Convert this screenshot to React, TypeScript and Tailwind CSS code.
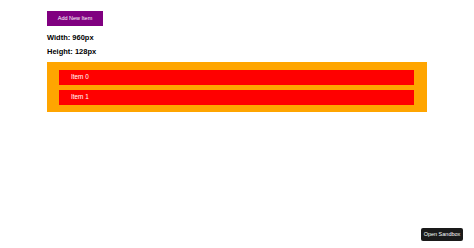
import React, { useState } from "react";

export default function App() {
  const [items, setItems] = useState<number[]>([0, 1]);
  return (
    <div className="relative w-[474px] h-[248px] bg-white overflow-hidden" style={{ fontFamily: '"Liberation Sans", Arial, sans-serif' }}>
      <div className="flex flex-col pl-[47px] pt-[11px]">
        <button
          onClick={() => setItems([...items, items.length])}
          className="w-[56px] h-[15px] bg-[#800080] text-white text-[5.5px] leading-none flex items-center justify-center"
        >
          Add New Item
        </button>
        <div className="mt-[5px] text-[7.5px] font-bold leading-[14px] text-black">Width: 960px</div>
        <div className="text-[7.5px] font-bold leading-[14px] text-black">Height: 128px</div>
        <div className="mt-[3px] w-[380px] h-[50px] bg-[#ffa500] pt-[8px] pl-[12px] flex flex-col gap-[5px]">
          {items.slice(0, 2).map((i) => (
            <div key={i} className="w-[355px] h-[15px] bg-[#ff0000] text-white text-[6.4px] leading-none flex items-center pl-[12px]">
              Item {i}
            </div>
          ))}
        </div>
      </div>
      <button className="absolute left-[421px] top-[228px] w-[42px] h-[13px] bg-[#1a1a1a] rounded-[2px] text-white text-[5.5px] leading-none flex items-center justify-center">
        Open Sandbox
      </button>
    </div>
  );
}
